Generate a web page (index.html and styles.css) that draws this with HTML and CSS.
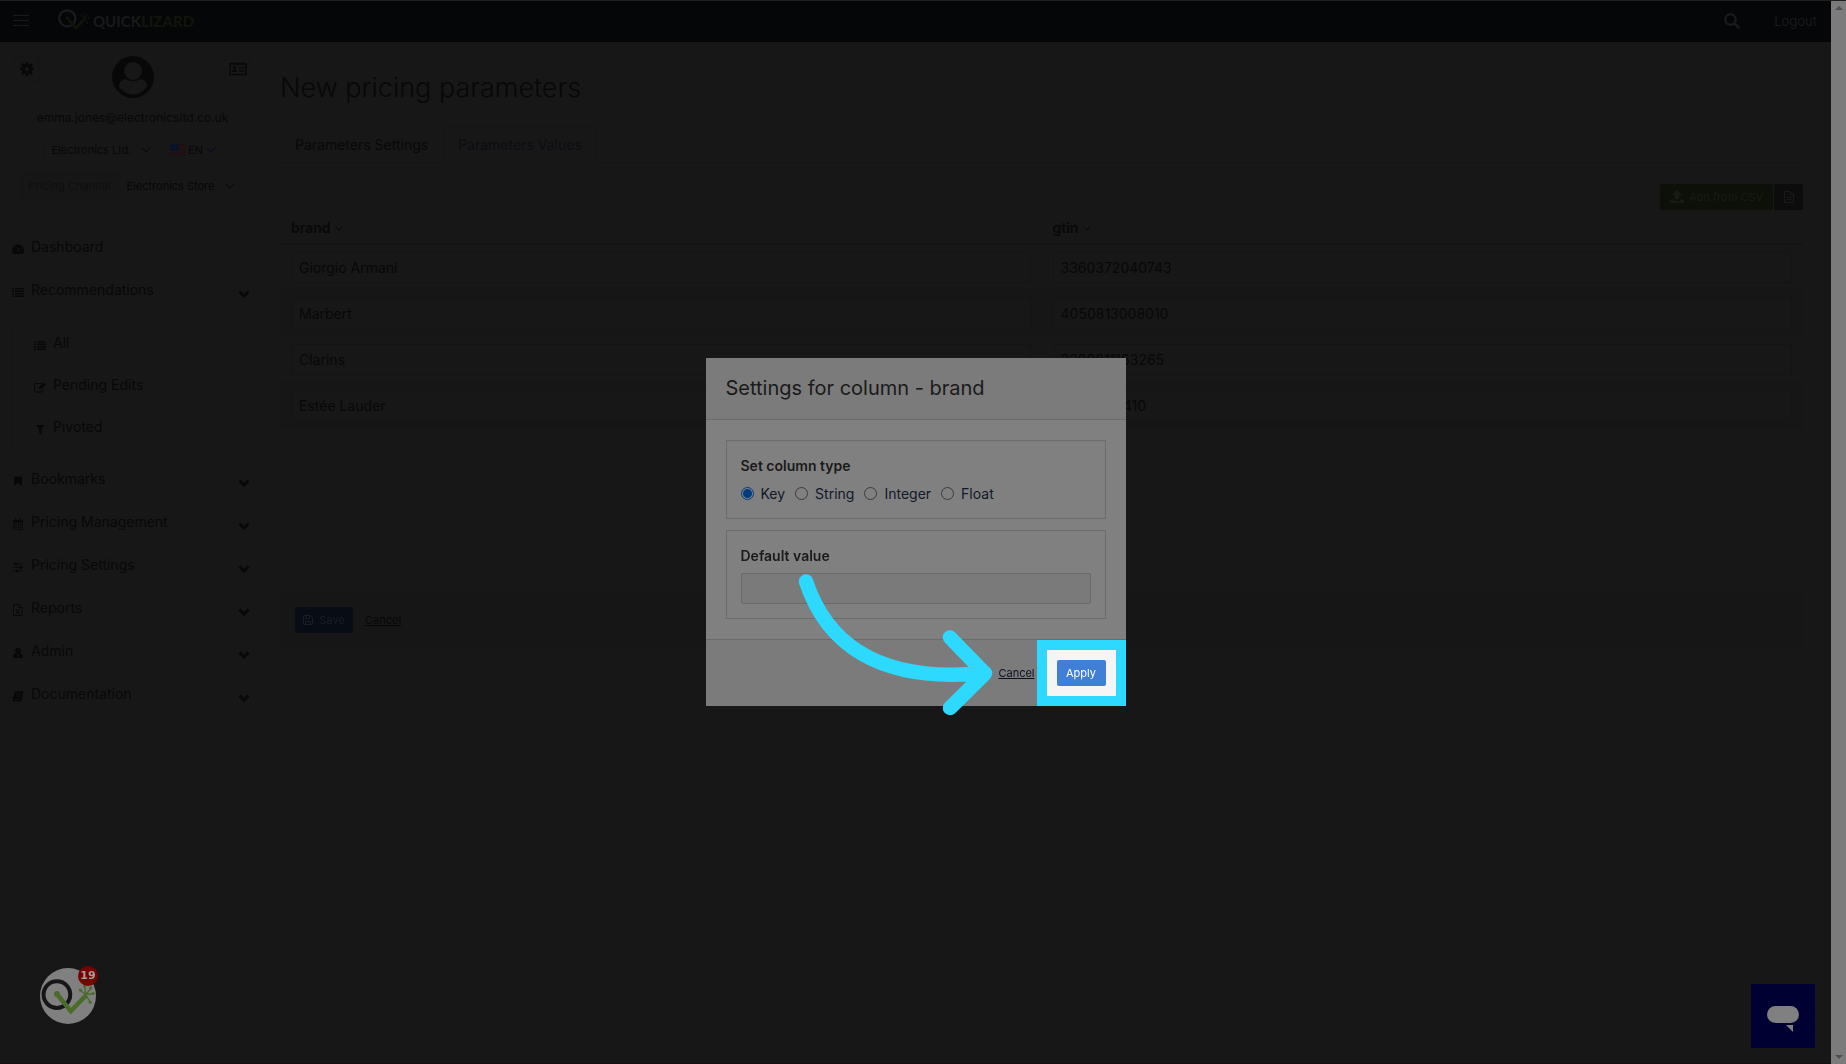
FILE: index.html
```html
<!DOCTYPE html>
<html lang="en">
<head>
<meta charset="utf-8">
<title>New pricing parameters</title>
<link rel="stylesheet" href="styles.css">
</head>
<body>
<svg class="defs" aria-hidden="true">
  <symbol id="chev" viewBox="0 0 12 8"><path d="M1.500 1.500 6 6 10.500 1.500" fill="none" stroke="currentColor" stroke-width="3"/></symbol>
  <symbol id="thin" viewBox="0 0 10 6"><path d="M1 1 5 5 9 1" fill="none" stroke="currentColor" stroke-width="1.200"/></symbol>
  <symbol id="list" viewBox="0 0 12 12"><path d="M0 2h2v1.500H0zM3 2h9v1.500H3zM0 4.500h2V6H0zM3 4.500h9V6H3zM0 7h2v1.500H0zM3 7h9v1.500H3zM0 9.500h2V11H0zM3 9.500h9V11H3z" fill="currentColor"/></symbol>
  <symbol id="mark" viewBox="0 0 48 36"><circle cx="14" cy="14" r="12" fill="none" stroke="var(--ring)" stroke-width="3.600"/><path d="M14 13.500 26.500 29 40 15" fill="none" stroke="var(--leg)" stroke-width="4"/><circle cx="14" cy="13.500" r="2.600" fill="var(--leg)"/><g stroke="var(--leg)" stroke-width="1.300"><path d="M40 14 35 10M40 14l-1-7M40 14l5-6M40 14l7-1M40 14l4 7"/></g><g fill="var(--leg)"><circle cx="35" cy="10" r="1.400"/><circle cx="39" cy="6.500" r="1.400"/><circle cx="44.500" cy="8" r="1.400"/><circle cx="46.500" cy="13" r="1.400"/><circle cx="44" cy="21" r="1.400"/></g></symbol>
</svg>

<div class="app">
  <header class="topbar">
    <button class="menu" aria-label="Menu"><svg width="16" height="12" viewBox="0 0 16 12"><path d="M0 .5h16M0 5.500h16M0 10.500h16" stroke="currentColor"/></svg></button>
    <a class="logo" href="#"><svg width="34" height="24"><use href="#mark"/></svg><span class="brand">QUICK<b>LIZARD</b></span></a>
    <button class="search" aria-label="Search"><svg width="16" height="16" viewBox="0 0 16 16"><circle cx="6.500" cy="6.500" r="5.200" fill="none" stroke="currentColor" stroke-width="2.400"/><path d="m10.500 10.500 4 4" stroke="currentColor" stroke-width="2.600" stroke-linecap="round"/></svg></button>
    <a class="logout" href="#">Logout</a>
  </header>

  <div class="columns">
    <aside class="sidebar">
      <div class="profile">
        <button class="square" aria-label="Settings"><svg width="14" height="14" viewBox="0 0 14 14"><circle cx="7" cy="7" r="3.600" fill="none" stroke="currentColor" stroke-width="3"/><path d="M7 0v3M7 11v3M0 7h3M11 7h3M2 2l2 2M10 10l2 2M12 2l-2 2M4 10l-2 2" stroke="currentColor" stroke-width="2.600"/></svg></button>
        <svg class="avatar" width="42" height="42" viewBox="0 0 42 42"><circle cx="21" cy="21" r="21" fill="currentColor"/><circle cx="21" cy="15" r="9" fill="#171717"/><path d="M7 31c0-5 3-8 7-8 4 3 10 3 14 0 4 0 7 3 7 8-8 10-20 10-28 0z" fill="#171717"/></svg>
        <button class="square" aria-label="Card"><svg width="18" height="14" viewBox="0 0 18 14"><path d="M1 1.500h16v11H1zM1 2h16" fill="none" stroke="currentColor" stroke-width="1.500"/><circle cx="5.500" cy="5.500" r="1.600" fill="currentColor"/><path d="M3 10V8.500q2.500-2 5 0V10zM10 5h5v1h-5zM10 7h2v1h-2zM13 7h2v1h-2zM10 9h5v1h-5z" fill="currentColor"/></svg></button>
      </div>
      <p class="email">emma.jones@electronicsltd.co.uk</p>
      <div class="picks">
        <button class="pick company">Electronics Ltd.<svg width="10" height="6"><use href="#thin"/></svg></button>
        <button class="pick lang"><svg width="16" height="11" viewBox="0 0 16 11"><path d="M0 0h16v11H0z" fill="#1d1617"/><path d="M0 .5h16M0 2.500h16M0 4.500h16M0 6.500h16M0 8.500h16M0 10.500h16" stroke="#220c10"/><path d="M0 0h9v7H0z" fill="#091326"/></svg>EN<svg class="blue" width="10" height="6"><use href="#thin"/></svg></button>
      </div>
      <div class="picks second">
        <span class="pick channel">Pricing Channel</span>
        <button class="pick store">Electronics Store<svg width="10" height="6"><use href="#thin"/></svg></button>
      </div>
      <nav class="nav">
        <a href="#"><svg width="12" height="12" viewBox="0 0 12 12"><path d="M6 1.500a6 6 0 0 1 6 6q0 2-1 3.500H1Q0 9.500 0 7.500a6 6 0 0 1 6-6z" fill="currentColor"/><path d="M6 9 7 5M2 7h1M9 7h1M3.500 4.500h1" stroke="#171717"/></svg><span>Dashboard</span></a>
        <a href="#"><svg width="12" height="12"><use href="#list"/></svg><span>Recommendations</span><svg class="arrow" width="12" height="8"><use href="#chev"/></svg></a>
        <div class="subnav">
          <a href="#"><svg width="12" height="12"><use href="#list"/></svg><span>All</span></a>
          <a href="#"><svg width="12" height="12" viewBox="0 0 12 12"><path d="M8 2.500H2Q.5 2.500.5 4v5.500Q.5 11 2 11h5.500Q9 11 9 9.500V8" fill="none" stroke="currentColor"/><path d="m4.500 8.500.5-2.500L10 1.500l2 2-5 4.500z" fill="currentColor"/></svg><span>Pending Edits</span></a>
          <a href="#"><svg width="12" height="12" viewBox="0 0 12 12"><path d="M1.500 2h9L7.500 6v5.500L5 9.500V6z" fill="currentColor"/></svg><span>Pivoted</span></a>
        </div>
        <a href="#"><svg width="12" height="12" viewBox="0 0 12 12"><path d="M2 1.500h8V11L6 7.500 2 11z" fill="currentColor"/></svg><span>Bookmarks</span><svg class="arrow" width="12" height="8"><use href="#chev"/></svg></a>
        <a href="#"><svg width="12" height="12" viewBox="0 0 12 12"><path d="M1 2h10v2.500H1zM3 .5h1.500V2H3zM7.500.5H9V2H7.500z" fill="currentColor"/><path d="M1.500 4v7.500h9V4M4 4v7.500M6.500 4v7.500M8.500 4v7.500M1 6.500h10M1 9h10" fill="none" stroke="currentColor" stroke-width=".6"/></svg><span>Pricing Management</span><svg class="arrow" width="12" height="8"><use href="#chev"/></svg></a>
        <a href="#"><svg width="12" height="12" viewBox="0 0 12 12"><path d="M1 3h10M1 6.500h10M1 10h10" stroke="currentColor" stroke-width=".8"/><path d="M3 1.500h2v3H3zM7.500 5h2v3h-2zM4 8.500h2v3H4z" fill="currentColor"/></svg><span>Pricing Settings</span><svg class="arrow" width="12" height="8"><use href="#chev"/></svg></a>
        <a href="#"><svg width="12" height="12" viewBox="0 0 12 12"><path d="M1.500.5H7L10 3.500v8H1.500zM7 .5v3h3M4 5l3.500 5M7.500 5 4 10" fill="none" stroke="currentColor"/></svg><span>Reports</span><svg class="arrow" width="12" height="8"><use href="#chev"/></svg></a>
        <a href="#"><svg width="12" height="12" viewBox="0 0 12 12"><path d="M4 1h4l.5 2H10v1H8.500v2Q11 7 11 11H1Q1 7 3.500 6V4H2V3h1.500z" fill="currentColor"/><path d="m5 7 1 2 1-2" fill="none" stroke="#171717" stroke-width=".8"/></svg><span>Admin</span><svg class="arrow" width="12" height="8"><use href="#chev"/></svg></a>
        <a href="#"><svg width="12" height="12" viewBox="0 0 12 12"><path d="M4 1h7.500L9.500 10.500Q9 11.500 8 11.500H1.500Q0 11 .5 9L3 2z" fill="currentColor"/><path d="M4.500 4h4M4 6h4M2 9.500h6" stroke="#171717" stroke-width=".8"/></svg><span>Documentation</span><svg class="arrow" width="12" height="8"><use href="#chev"/></svg></a>
      </nav>
    </aside>

    <main class="main">
      <h1>New pricing parameters</h1>
      <div class="tabs"><a href="#">Parameters Settings</a><a class="on" href="#">Parameters Values</a></div>
      <div class="tools">
        <button class="csv"><svg width="14" height="14" viewBox="0 0 14 14"><path d="M7 0 12 5H9v4H5V5H2zM0 9.500h4v1.500h6V9.500h4V13H0z" fill="currentColor"/></svg>Add from CSV</button>
        <button class="doc" aria-label="Template"><svg width="10" height="12" viewBox="0 0 10 12"><path d="M.5.5H6L9.500 4v7.500h-9zM6 .5V4h3.500M2.500 6.500h5M2.500 8.500h5" fill="none" stroke="currentColor"/></svg></button>
      </div>
      <table>
        <thead><tr><th>brand <svg width="8" height="5"><use href="#thin"/></svg></th><th>gtin <svg width="8" height="5"><use href="#thin"/></svg></th></tr></thead>
        <tbody>
          <tr><td><input aria-label="brand" value="Giorgio Armani"></td><td><input aria-label="gtin" value="3360372040743"></td></tr>
          <tr><td><input aria-label="brand" value="Marbert"></td><td><input aria-label="gtin" value="4050813008010"></td></tr>
          <tr><td><input aria-label="brand" value="Clarins"></td><td><input aria-label="gtin" value="3380811163265"></td></tr>
          <tr><td><input aria-label="brand" value="Estée Lauder"></td><td><input aria-label="gtin" value="27131935410"></td></tr>
        </tbody>
      </table>
      <div class="actions">
        <button class="save"><svg width="10" height="10" viewBox="0 0 10 10"><path d="M.5.5h7l2 2v7h-9zM2.500.5V3.500h4V.5M2.500 9.500v-3h5v3" fill="none" stroke="currentColor"/></svg>Save</button>
        <a href="#">Cancel</a>
      </div>
    </main>
  </div>
</div>

<div class="scrollbar" aria-hidden="true"><svg width="8" height="4" viewBox="0 0 8 4"><path d="M0 4 4 0l4 4z" fill="#505050"/></svg><svg width="8" height="4" viewBox="0 0 8 4"><path d="M0 0 4 4l4-4z" fill="#505050"/></svg></div>

<div class="overlay">
  <form class="modal" role="dialog" aria-labelledby="title">
    <h2 id="title">Settings for column - brand</h2>
    <div class="body">
      <fieldset>
        <p class="label">Set column type</p>
        <div class="radios">
          <label><input type="radio" name="type" checked>Key</label>
          <label><input type="radio" name="type">String</label>
          <label><input type="radio" name="type">Integer</label>
          <label><input type="radio" name="type">Float</label>
        </div>
      </fieldset>
      <fieldset>
        <label class="label" for="default">Default value</label>
        <input class="default" id="default" type="text">
      </fieldset>
    </div>
    <div class="foot">
      <a href="#">Cancel</a>
      <div class="spot"><button type="button">Apply</button></div>
    </div>
    <svg class="pointer" width="200" height="160" viewBox="796 562 200 160"><path d="M806 581.500C826 642 877 684 985 673M950 637.500l35 36-35 34.500" fill="none" stroke="#2ed9ff" stroke-width="14.500" stroke-linecap="round" stroke-linejoin="round"/></svg>
  </form>
</div>

<button class="helper" aria-label="Help"><svg width="54" height="40"><use href="#mark"/></svg><span>19</span></button>
<button class="chat" aria-label="Chat"><svg width="32" height="26" viewBox="0 0 32 26"><rect width="32" height="17" rx="8.500" fill="#808080"/><path d="M19 19h7v7z" fill="#808080"/></svg></button>
</body>
</html>
```
FILE: styles.css
```css
* { box-sizing: border-box; }
body { margin: 0; min-height: 100vh; background: #171717; border-top: 1px solid #1f1f1f; border-bottom: 1px solid #170d12; color: #080808; font: 14px/20px Inter, "Noto Sans", sans-serif; }
button, input { font: inherit; color: inherit; }
button { border: 0; padding: 0; background: none; }
a { color: inherit; text-decoration: none; }
p, h1, h2 { margin: 0; }
svg { flex: none; }
.defs { position: absolute; width: 0; height: 0; }
.app { margin-right: 15px; }

.topbar { display: flex; align-items: center; height: 41px; padding: 0 14px 2px 13px; background: #040608; color: #1a1a1a; }
.menu, .search { display: flex; }
.logo { display: flex; align-items: center; gap: 2px; margin-left: 28px; --ring: #1a1a1a; --leg: #10150a; }
.brand { font: 700 15px/20px Lato, sans-serif; }
.brand b { color: #10150a; }
.search { margin-left: auto; }
.logout { margin-left: 34px; font-size: 13px; }

.columns { display: flex; }
.sidebar { width: 266px; border-right: 1px solid #161616; padding: 14px 0 0; }
.profile { display: flex; justify-content: space-between; align-items: flex-start; padding: 0 14px; }
.square { display: flex; align-items: center; justify-content: center; width: 26px; height: 26px; border: 1px solid #151515; border-radius: 2px; }
.email { margin-top: 10px; text-align: center; font-size: 12px; }
.picks { display: flex; justify-content: center; margin-top: 9px; font-size: 11px; line-height: 16px; }
.second { margin-top: 11px; }
.pick { display: flex; align-items: center; justify-content: space-between; height: 25px; padding: 0 10px 0 7px; border: 1px solid #151515; white-space: nowrap; }
.pick + .pick { border-left: 0; }
.pick svg { color: #0c0c0c; }
.company { width: 118px; }
.lang { width: 60px; padding: 0 5px 0 8px; }
.pick .blue { color: #08101c; }
.channel { width: 100px; padding-left: 8px; color: #0f0f0f; background: #161616; }
.store { width: 126px; }
.nav { display: flex; flex-direction: column; gap: 1px; margin-top: 28px; padding: 0 15px 20px 12px; }
.nav a { display: flex; align-items: center; gap: 7px; height: 42px; }
.nav a > svg { margin-top: 3px; }
.nav a > .arrow { margin: 7px 0 0 auto; }
.subnav { margin: 10px 0 9px -1px; padding-left: 22px; border-left: 1px solid #151515; }

.main { flex: 1; padding: 26px 28px 0 14px; }
h1 { font-size: 27px; line-height: 40px; font-weight: 300; }
.tabs { display: flex; margin-top: 18px; border-bottom: 1px solid #141414; }
.tabs a { height: 36px; padding: 9px 15px; }
.tabs .on { margin-bottom: -1px; height: 37px; padding: 8px 14px; border: 1px solid #141414; border-bottom-color: #171717; color: #0b0d12; }
.tools { display: flex; justify-content: flex-end; gap: 1px; margin-top: 21px; font-size: 11px; }
.tools button { display: flex; align-items: center; justify-content: center; gap: 5px; height: 26px; border-radius: 2px; }
.csv { width: 113px; background: #0d1008; color: #171a14; }
.doc { width: 29px; background: #0c0c0c; color: #1a1a1a; }
table { width: 100%; table-layout: fixed; border-collapse: collapse; }
th { height: 34px; padding: 3px 11px 0; text-align: left; font-weight: 600; border-bottom: 2px solid #141414; }
th svg { margin: 0 0 2px 1px; }
td { padding: 7px 11px; border-bottom: 1px solid #151515; }
tbody tr:nth-child(even) { background: #161616; }
td input { display: block; width: 100%; height: 31px; padding: 0 7px; border: 1px solid #141414; border-radius: 2px; background: #171717; }
.actions { display: flex; align-items: center; gap: 12px; height: 54px; margin-top: 164px; padding: 0 15px; background: #161616; font-size: 11px; }
.save { display: flex; align-items: center; justify-content: center; gap: 6px; width: 58px; height: 26px; border-radius: 2px; background: #080c14; color: #1a1d24; }
.actions a { text-decoration: underline; }

.scrollbar { position: fixed; top: 1px; right: 0; bottom: 0; width: 15px; display: flex; flex-direction: column; justify-content: space-between; align-items: center; padding: 5px 0; background: #7b7b7b; }

.overlay { position: fixed; inset: 0 15px 0 0; display: flex; align-items: center; justify-content: center; }
.modal { position: relative; width: 420px; border-radius: 2px; background: #808080; color: #1a1a1a; }
h2 { padding: 16px 20px; border-bottom: 1px solid #6b6b6b; background: #7b7b7b; font-size: 20px; line-height: 29px; font-weight: 400; }
.body { display: flex; flex-direction: column; gap: 11px; padding: 20px; }
fieldset { min-width: 0; margin: 0; padding: 15px 14px 14px; border: 1px solid #696d70; }
.label { display: block; font-weight: 600; }
.radios { display: flex; gap: 10px; margin-top: 8px; color: #10182a; }
.radios label { display: flex; align-items: center; gap: 7px; }
.radios input { appearance: none; width: 13px; height: 13px; margin: 0 0 2px; border: 1px solid #3b3b3b; border-radius: 50%; }
.radios input:checked { border-color: #003b80; background: radial-gradient(#003b80 4px, #808080 5px); }
.default { display: block; width: 100%; height: 31px; margin-top: 7px; padding: 0 7px; border: 1px solid #6b6b6b; border-radius: 2px; background: #7a7a7a; }
.foot { display: flex; align-items: center; justify-content: flex-end; gap: 2px; border-top: 1px solid #6b6b6b; background: #7b7b7b; font-size: 11px; }
.foot a { color: #0b1020; text-decoration: underline; }
.spot { padding: 10px; border: 10px solid #2ed9ff; background: #f5f5f5; }
.spot button { display: block; width: 49px; height: 26px; border-radius: 2px; background: #417ed6; color: #fff; }
.pointer { position: absolute; left: 90px; top: 204px; pointer-events: none; }

.helper { position: fixed; left: 40px; bottom: 40px; display: flex; align-items: center; width: 56px; height: 56px; padding: 6px 0 0 1px; border-radius: 50%; background: #808080; --ring: #161616; --leg: #4b6b2b; }
.helper span { position: absolute; top: -2px; right: -2px; width: 20px; height: 20px; border-radius: 50%; background: #7a0000; color: #a0a0a0; font: 700 11px/20px "DejaVu Sans", sans-serif; }
.chat { position: fixed; right: 31px; bottom: 16px; display: flex; align-items: center; justify-content: center; width: 64px; height: 64px; padding-top: 5px; background: #000033; }
```
